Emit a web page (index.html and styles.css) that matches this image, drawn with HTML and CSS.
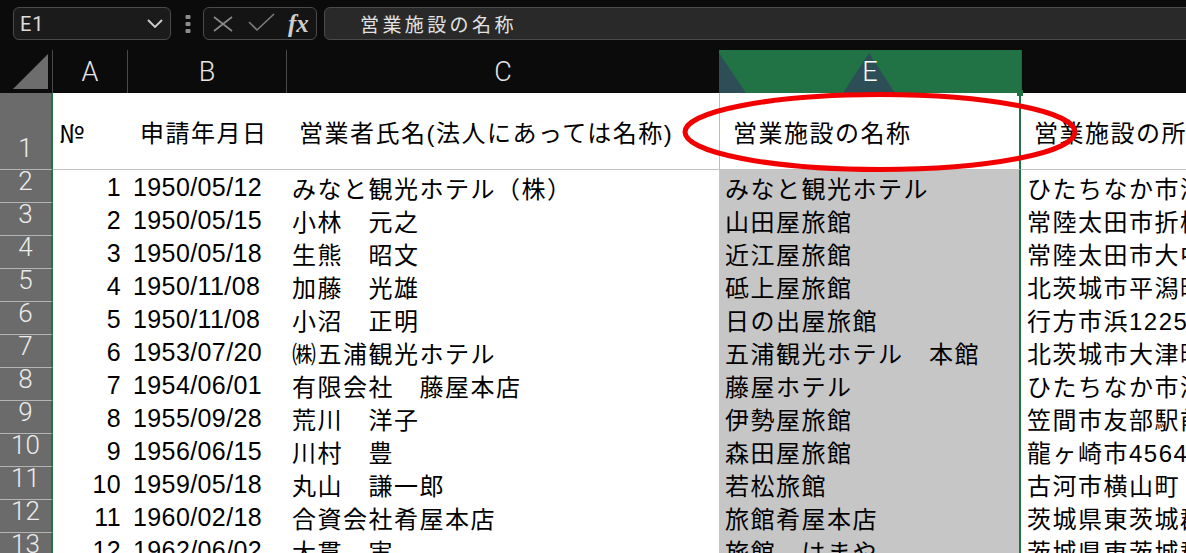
FILE: index.html
```html
<!DOCTYPE html>
<html lang="ja">
<head>
    <meta charset="UTF-8">
    <meta name="viewport" content="width=device-width, initial-scale=1.0">
    <title>営業施設一覧 - Excel</title>
    <link rel="stylesheet" href="styles.css">
</head>
<body>
    <div class="app">
        <div class="formula-bar">
            <div class="namebox">
                <span>E1</span>
                <svg class="chevron" width="16" height="9" viewBox="0 0 16 9"><polyline points="1,1 8,8 15,1" fill="none" stroke="#cfcfcf" stroke-width="1.8"/></svg>
            </div>
            <div class="grip">
                <svg width="6" height="18" viewBox="0 0 6 18"><rect x="0.5" y="0" width="5" height="4" rx="1" fill="#8c8c8c"/><rect x="0.5" y="7" width="5" height="4" rx="1" fill="#8c8c8c"/><rect x="0.5" y="14" width="5" height="4" rx="1" fill="#8c8c8c"/></svg>
            </div>
            <div class="fx-buttons">
                <svg width="20" height="16" viewBox="0 0 20 16"><path d="M1 1 L19 15 M19 1 L1 15" stroke="#8a8a8a" stroke-width="1.6" fill="none"/></svg>
                <svg class="check" width="27" height="19" viewBox="0 0 27 19"><polyline points="1,9 9,17 26,1" fill="none" stroke="#7c7c7c" stroke-width="1.6"/></svg>
                <span class="fx">fx</span>
            </div>
            <div class="formula-input">営業施設の名称</div>
        </div>

        <div class="sheet">
            <!-- column headers -->
            <div class="ch corner"><svg width="36" height="36" viewBox="0 0 36 36"><polygon points="0,35 35,0 35,35" fill="#6d6d6d"/></svg></div>
            <div class="ch">A</div>
            <div class="ch">B</div>
            <div class="ch">C</div>
            <div class="ch ch-active">
                <svg class="ch-shade" width="302" height="43" viewBox="0 0 302 43"><polygon points="0,3 0,43 27,43" fill="#2d4e57"/><polygon points="124,43 150,3 176,43" fill="#2d4e57"/></svg>
                <span>E</span>
            </div>
            <div class="ch"></div>

            <!-- row 1 -->
            <div class="rh rh-first">1</div>
            <div class="cell head no">№</div>
            <div class="cell head">申請年月日</div>
            <div class="cell head">営業者氏名(法人にあっては名称)</div>
            <div class="cell head sel-head">営業施設の名称<i class="handle"></i></div>
            <div class="cell head">営業施設の所在地</div>

            <div class="rh">2</div><div class="cell num">1</div><div class="cell date">1950/05/12</div><div class="cell">みなと観光ホテル（株）</div><div class="cell sel">みなと観光ホテル</div><div class="cell">ひたちなか市湊本町</div>
            <div class="rh">3</div><div class="cell num">2</div><div class="cell date">1950/05/15</div><div class="cell">小林　元之</div><div class="cell sel">山田屋旅館</div><div class="cell">常陸太田市折橋町</div>
            <div class="rh">4</div><div class="cell num">3</div><div class="cell date">1950/05/18</div><div class="cell">生熊　昭文</div><div class="cell sel">近江屋旅館</div><div class="cell">常陸太田市大中町</div>
            <div class="rh">5</div><div class="cell num">4</div><div class="cell date">1950/11/08</div><div class="cell">加藤　光雄</div><div class="cell sel">砥上屋旅館</div><div class="cell">北茨城市平潟町</div>
            <div class="rh">6</div><div class="cell num">5</div><div class="cell date">1950/11/08</div><div class="cell">小沼　正明</div><div class="cell sel">日の出屋旅館</div><div class="cell">行方市浜1225</div>
            <div class="rh">7</div><div class="cell num">6</div><div class="cell date">1953/07/20</div><div class="cell">㈱五浦観光ホテル</div><div class="cell sel">五浦観光ホテル　本館</div><div class="cell">北茨城市大津町</div>
            <div class="rh">8</div><div class="cell num">7</div><div class="cell date">1954/06/01</div><div class="cell">有限会社　藤屋本店</div><div class="cell sel">藤屋ホテル</div><div class="cell">ひたちなか市湊中央</div>
            <div class="rh">9</div><div class="cell num">8</div><div class="cell date">1955/09/28</div><div class="cell">荒川　洋子</div><div class="cell sel">伊勢屋旅館</div><div class="cell">笠間市友部駅前</div>
            <div class="rh">10</div><div class="cell num">9</div><div class="cell date">1956/06/15</div><div class="cell">川村　豊</div><div class="cell sel">森田屋旅館</div><div class="cell">龍ヶ崎市4564</div>
            <div class="rh">11</div><div class="cell num">10</div><div class="cell date">1959/05/18</div><div class="cell">丸山　謙一郎</div><div class="cell sel">若松旅館</div><div class="cell">古河市横山町</div>
            <div class="rh">12</div><div class="cell num">11</div><div class="cell date">1960/02/18</div><div class="cell">合資会社肴屋本店</div><div class="cell sel">旅館肴屋本店</div><div class="cell">茨城県東茨城郡</div>
            <div class="rh">13</div><div class="cell num">12</div><div class="cell date">1962/06/02</div><div class="cell">大貫　実</div><div class="cell sel">旅館　はまや</div><div class="cell">茨城県東茨城郡</div>
        </div>

        <!-- annotation -->
        <svg class="mark" width="1186" height="553" viewBox="0 0 1186 553"><ellipse cx="880" cy="132" rx="195" ry="37.5" fill="none" stroke="#f20000" stroke-width="5"/></svg>
    </div>
</body>
</html>
```

FILE: styles.css
```css
* { margin: 0; padding: 0; box-sizing: border-box; }
body {
    background: #0b0b0b;
    font-family: "Liberation Sans", "Noto Sans CJK JP", sans-serif;
    overflow: hidden;
}
.app {
    position: relative;
    width: 1186px;
    height: 553px;
    overflow: hidden;
}

/* formula bar */
.formula-bar {
    display: flex;
    align-items: flex-start;
    height: 50px;
    padding: 7px 0 0 13px;
}
.namebox {
    width: 158px;
    height: 33px;
    display: flex;
    align-items: center;
    justify-content: space-between;
    padding: 0 7px 0 6px;
    background: #1b1b1b;
    border: 1px solid #4b4b4b;
    border-radius: 6px;
    color: #dedede;
    font-family: Roboto, "Liberation Sans", sans-serif;
    font-size: 20px;
    letter-spacing: 1px;
}
.grip {
    width: 32px;
    height: 33px;
    display: flex;
    align-items: center;
    justify-content: center;
    padding-left: 2px;
}
.fx-buttons {
    width: 114px;
    height: 33px;
    display: flex;
    align-items: center;
    padding-left: 9px;
    background: #141414;
    border: 1px solid #4b4b4b;
    border-radius: 6px;
}
.fx-buttons .check { margin-left: 15px; margin-top: -2px; }
.fx {
    margin-left: 13px;
    color: #cdcdcd;
    font-family: "Liberation Serif", serif;
    font-style: italic;
    font-weight: bold;
    font-size: 25px;
    line-height: 1;
}
.formula-input {
    flex: 1;
    height: 33px;
    margin: 0 -10px 0 7px;
    padding-left: 35px;
    display: flex;
    align-items: center;
    background: #292929;
    border: 1px solid #4b4b4b;
    border-radius: 6px;
    color: #e2e2e2;
    font-size: 19px;
    letter-spacing: 3.4px;
}

/* sheet grid */
.sheet {
    display: grid;
    grid-template-columns: 53px 74px 159px 433px 302px 165px;
    grid-template-rows: 43px 77px repeat(12, 33px);
}
.ch {
    position: relative;
    display: flex;
    align-items: center;
    justify-content: center;
    background: #0b0b0b;
    border-left: 1px solid #4a4a4a;
    color: #e6e6e6;
    font-family: Roboto, "Liberation Sans", sans-serif;
    font-weight: 300;
    font-size: 27px;
}
.ch.corner {
    border-left: none;
    border-right: 1px solid #4a4a4a;
    justify-content: flex-end;
    align-items: flex-end;
    padding: 0 3px 3px 0;
}
.ch.corner + .ch { border-left: none; }
.ch-active {
    background: #217346;
    border-left: none;
    color: #fff;
}
.ch-active span { position: relative; }
.ch-shade { position: absolute; left: 0; top: 0; }

.rh {
    display: flex;
    align-items: flex-end;
    justify-content: center;
    padding-bottom: 11px;
    background: #6b6b6b;
    border-right: 2px solid #217346;
    border-bottom: 1px solid #b4b4b4;
    color: #ececec;
    font-family: Roboto, "Liberation Sans", sans-serif;
    font-weight: 300;
    font-size: 26px;
    line-height: 20px;
}

.cell {
    display: flex;
    align-items: center;
    padding: 1px 0 0 6px;
    background: #fff;
    color: #000;
    font-size: 24px;
    letter-spacing: 1.5px;
    white-space: nowrap;
    overflow: hidden;
}
.cell.head {
    padding-left: 13px;
    border-bottom: 1px solid #c2c2c2;
}
.cell.head.no {
    padding-left: 6px;
    font-family: "Noto Sans CJK JP", sans-serif;
    font-size: 25px;
}
.cell.num {
    justify-content: flex-end;
    padding: 1px 6px 0 0;
    font-size: 25px;
    letter-spacing: 0.4px;
}
.cell.date {
    font-size: 25px;
    letter-spacing: 0.4px;
}
.sel-head {
    position: relative;
    overflow: visible;
    border-left: 1px solid #bdbdbd;
    border-right: 2px solid #217346;
}
.sel {
    background: #c6c6c6;
    border-right: 2px solid #217346;
}
.handle {
    position: absolute;
    right: -4px;
    top: -3px;
    width: 6px;
    height: 6px;
    background: #217346;
}

.mark {
    position: absolute;
    left: 0;
    top: 0;
    pointer-events: none;
}
```
